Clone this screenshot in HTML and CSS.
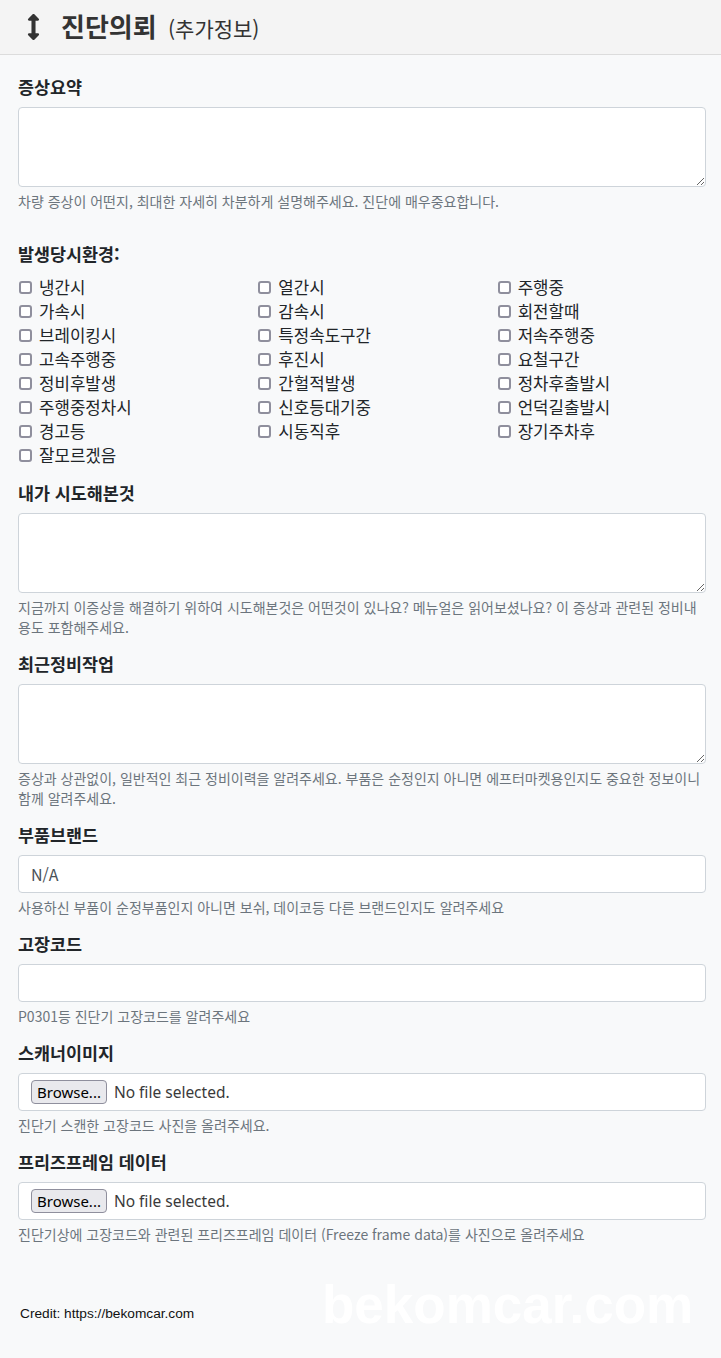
FILE: index.html
```html
<!DOCTYPE html>
<html lang="ko">
<head>
<meta charset="utf-8">
<title>진단의뢰</title>
<link rel="stylesheet" href="styles.css">
</head>
<body>
<header class="page-head">
  <svg class="head-icon" viewBox="0 0 256 512" aria-hidden="true"><path d="M214.059 377.941H168V134.059h46.059c21.382 0 32.09-25.851 16.971-40.971L144.971 7.029c-9.373-9.373-24.568-9.373-33.941 0L24.971 93.088c-15.119 15.119-4.411 40.971 16.971 40.971H88v243.882H41.941c-21.382 0-32.09 25.851-16.971 40.971l86.059 86.059c9.373 9.373 24.568 9.373 33.941 0l86.059-86.059c15.12-15.119 4.412-40.971-16.97-40.971z"/></svg>
  <h1 class="head-title">진단의뢰 <span class="head-sub">(추가정보)</span></h1>
</header>

<main class="form">
  <div class="group">
    <label class="lbl">증상요약</label>
    <textarea class="ctl ta"></textarea>
    <div class="help">차량 증상이 어떤지, 최대한 자세히 차분하게 설명해주세요. 진단에 매우중요합니다.</div>
  </div>

  <div class="group group-env">
    <label class="lbl lbl-env">발생당시환경:</label>
    <div class="checks">
      <label class="chk"><input type="checkbox">냉간시</label>
      <label class="chk"><input type="checkbox">열간시</label>
      <label class="chk"><input type="checkbox">주행중</label>
      <label class="chk"><input type="checkbox">가속시</label>
      <label class="chk"><input type="checkbox">감속시</label>
      <label class="chk"><input type="checkbox">회전할때</label>
      <label class="chk"><input type="checkbox">브레이킹시</label>
      <label class="chk"><input type="checkbox">특정속도구간</label>
      <label class="chk"><input type="checkbox">저속주행중</label>
      <label class="chk"><input type="checkbox">고속주행중</label>
      <label class="chk"><input type="checkbox">후진시</label>
      <label class="chk"><input type="checkbox">요철구간</label>
      <label class="chk"><input type="checkbox">정비후발생</label>
      <label class="chk"><input type="checkbox">간헐적발생</label>
      <label class="chk"><input type="checkbox">정차후출발시</label>
      <label class="chk"><input type="checkbox">주행중정차시</label>
      <label class="chk"><input type="checkbox">신호등대기중</label>
      <label class="chk"><input type="checkbox">언덕길출발시</label>
      <label class="chk"><input type="checkbox">경고등</label>
      <label class="chk"><input type="checkbox">시동직후</label>
      <label class="chk"><input type="checkbox">장기주차후</label>
      <label class="chk"><input type="checkbox">잘모르겠음</label>
    </div>
  </div>

  <div class="group">
    <label class="lbl">내가 시도해본것</label>
    <textarea class="ctl ta"></textarea>
    <div class="help">지금까지 이증상을 해결하기 위하여 시도해본것은 어떤것이 있나요? 메뉴얼은 읽어보셨나요? 이 증상과 관련된 정비내용도 포함해주세요.</div>
  </div>

  <div class="group">
    <label class="lbl">최근정비작업</label>
    <textarea class="ctl ta"></textarea>
    <div class="help">증상과 상관없이, 일반적인 최근 정비이력을 알려주세요. 부품은 순정인지 아니면 에프터마켓용인지도 중요한 정보이니 함께 알려주세요.</div>
  </div>

  <div class="group">
    <label class="lbl">부품브랜드</label>
    <input class="ctl inp" type="text" value="N/A">
    <div class="help">사용하신 부품이 순정부품인지 아니면 보쉬, 데이코등 다른 브랜드인지도 알려주세요</div>
  </div>

  <div class="group">
    <label class="lbl">고장코드</label>
    <input class="ctl inp" type="text">
    <div class="help">P0301등 진단기 고장코드를 알려주세요</div>
  </div>

  <div class="group">
    <label class="lbl">스캐너이미지</label>
    <div class="ctl filebox"><span class="browse">Browse...</span><span class="nofile">No file selected.</span></div>
    <div class="help">진단기 스캔한 고장코드 사진을 올려주세요.</div>
  </div>

  <div class="group">
    <label class="lbl">프리즈프레임 데이터</label>
    <div class="ctl filebox"><span class="browse">Browse...</span><span class="nofile">No file selected.</span></div>
    <div class="help">진단기상에 고장코드와 관련된 프리즈프레임 데이터 (Freeze frame data)를 사진으로 올려주세요</div>
  </div>
</main>

<footer class="credit">Credit: https://bekomcar.com</footer>
<div class="watermark">bekomcar.com</div>
</body>
</html>
```

FILE: styles.css
```css
html, body {
  margin: 0;
  padding: 0;
}
body {
  background: #f8f9fa;
  font-family: "Noto Sans CJK KR", "Noto Sans", sans-serif;
  color: #212529;
  min-height: 1358px;
  position: relative;
}
.page-head {
  height: 55px;
  box-sizing: border-box;
  background: #f4f4f4;
  border-bottom: 1px solid #dcdcdc;
  display: flex;
  align-items: center;
  padding-left: 27px;
  gap: 21px;
}
.head-icon {
  width: 13px;
  height: 26px;
  fill: #333;
  flex: none;
}
.head-title {
  margin: 0;
  font-size: 26px;
  font-weight: 700;
  color: #333;
  line-height: 32px;
}
.head-sub {
  font-size: 21px;
  font-weight: 400;
  margin-left: 4px;
}
.form {
  padding: 20px 15px 0 18px;
}
.group {
  margin-bottom: 15px;
}
.group-env {
  padding-top: 16px;
  margin-bottom: 14px;
}
.lbl {
  display: block;
  font-size: 17.4px;
  font-weight: 700;
  line-height: 24px;
  margin-bottom: 8px;
  color: #212529;
}
.lbl-env {
  margin-bottom: 9px;
}
.ctl {
  display: block;
  width: 100%;
  box-sizing: border-box;
  background: #fff;
  border: 1px solid #ced4da;
  border-radius: 4px;
  margin: 0;
}
.ta {
  height: 80px;
  font-family: inherit;
  font-size: 16px;
  padding: 6px 12px;
}
.inp {
  height: 38px;
  padding: 6px 12px;
  font-family: "Noto Sans CJK KR", "Noto Sans", sans-serif;
  font-size: 16px;
  color: #495057;
  outline: none;
}
.filebox {
  height: 38px;
  padding: 0 12px;
  display: flex;
  align-items: center;
  gap: 7px;
  font-family: "Noto Sans", sans-serif;
  font-size: 15.5px;
  color: #333;
}
.browse {
  height: 24px;
  box-sizing: border-box;
  padding: 0 5px;
  background: #e9e9ed;
  border: 1px solid #8f8f9d;
  border-radius: 4px;
  color: #000;
  display: flex;
  align-items: center;
  font-size: 15px;
}
.nofile {
  color: #3a3a3a;
}
.help {
  margin-top: 4px;
  font-size: 14px;
  line-height: 20px;
  color: #6c757d;
}
.checks {
  display: grid;
  grid-template-columns: repeat(3, 1fr);
  margin: 0 -15px;
}
.chk {
  display: flex;
  align-items: center;
  height: 24px;
  padding-left: 15px;
  font-size: 16.8px;
  color: #212529;
}
.chk input {
  appearance: none;
  -webkit-appearance: none;
  box-sizing: border-box;
  width: 13px;
  height: 13px;
  margin: 0 7px 0 1px;
  border: 2px solid #8f8f9d;
  border-radius: 3px;
  background: #fff;
  flex: none;
}
.credit {
  padding: 45px 20px 0;
  font-family: "Liberation Sans", Arial, sans-serif;
  font-size: 13.7px;
  line-height: 20px;
  color: #111;
}
.watermark {
  position: absolute;
  left: 322px;
  top: 1275px;
  font-family: "Liberation Sans", Arial, sans-serif;
  font-weight: 700;
  font-size: 53px;
  line-height: 60px;
  color: #fff;
}
```
